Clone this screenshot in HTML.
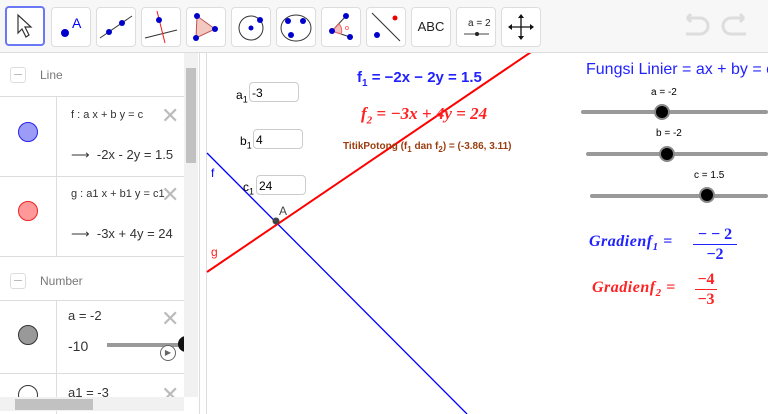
<!DOCTYPE html><html><head><style>
body{margin:0;width:768px;height:414px;overflow:hidden;background:#fff;font-family:"Liberation Sans",sans-serif;position:relative}
.a{position:absolute}
.tb{left:0;top:0;width:768px;height:52px;background:#f7f7f7;border-bottom:1px solid #ddd}
.btn{position:absolute;top:7px;width:38px;height:38px;background:#fff;border:1px solid #ddd;border-radius:4px}
.sel{border:2px solid #6b78f5;width:36px;height:36px}
.hl{height:1px;background:#ddd;left:0;width:184px}
.vl{width:1px;background:#ddd}
.t{font-size:12px;color:#333;white-space:nowrap}
.x{font-size:22px;color:#bbb;font-weight:100}
.inp{border:1px solid #ccc;border-radius:4px;height:20px;background:#fff;font-size:12px;line-height:20px;padding-left:2px;box-sizing:border-box}
</style></head><body>
<div class="a tb"></div>
<div class="btn sel" style="left:5px;top:6px"><svg width="36" height="36"><path d="M11 7 L11 25 L15 21 L19 29 L22 27 L18 19 L24 19 Z" fill="#fff" stroke="#333" stroke-width="1.2"/></svg></div>
<div class="btn" style="left:51px"><svg width="38" height="38"><circle cx="13" cy="25" r="4" fill="#00c"/><text x="20" y="20" font-size="14" fill="#00f" font-family="Liberation Sans">A</text></svg></div>
<div class="btn" style="left:96px"><svg width="38" height="38"><line x1="3" y1="30" x2="35" y2="8" stroke="#333"/><circle cx="12" cy="24" r="3" fill="#00c"/><circle cx="25" cy="15" r="3" fill="#00c"/></svg></div>
<div class="btn" style="left:141px"><svg width="38" height="38"><line x1="3" y1="30" x2="35" y2="22" stroke="#333"/><line x1="15" y1="3" x2="23" y2="35" stroke="#e22"/><circle cx="17" cy="12" r="3" fill="#00c"/></svg></div>
<div class="btn" style="left:186px"><svg width="38" height="38"><polygon points="10,8 28,21 9,30" fill="#f3c8c0" stroke="#b55"/><circle cx="10" cy="8" r="3" fill="#00c"/><circle cx="28" cy="21" r="3" fill="#00c"/><circle cx="9" cy="30" r="3" fill="#00c"/></svg></div>
<div class="btn" style="left:231px"><svg width="38" height="38"><circle cx="19" cy="20" r="12" fill="none" stroke="#333"/><circle cx="19" cy="20" r="2.5" fill="#00c"/><circle cx="28" cy="12" r="3" fill="#00c"/></svg></div>
<div class="btn" style="left:276px"><svg width="38" height="38"><ellipse cx="19" cy="20" rx="15" ry="13" fill="none" stroke="#333"/><circle cx="11" cy="13" r="3" fill="#00c"/><circle cx="26" cy="13" r="3" fill="#00c"/><circle cx="14" cy="27" r="3" fill="#00c"/></svg></div>
<div class="btn" style="left:321px"><svg width="38" height="38"><path d="M10 23 L24 8 M10 23 L28 29" stroke="#333"/><path d="M10 23 L17 16 A9 9 0 0 1 19 26 Z" fill="#f3c0c0" stroke="#e66"/><circle cx="10" cy="23" r="3" fill="#00c"/><circle cx="24" cy="8" r="3" fill="#00c"/><circle cx="28" cy="29" r="3" fill="#00c"/><text x="23" y="22" font-size="7" fill="#e22">o</text></svg></div>
<div class="btn" style="left:366px"><svg width="38" height="38"><line x1="5" y1="5" x2="33" y2="33" stroke="#333"/><circle cx="28" cy="10" r="2.5" fill="#e00"/><circle cx="10" cy="27" r="3" fill="#00c"/></svg></div>
<div class="btn" style="left:411px;font-size:13px;text-align:center;line-height:38px;color:#222">ABC</div>
<div class="btn" style="left:456px"><svg width="38" height="38"><text x="11" y="18" font-size="10" fill="#222" font-family="Liberation Sans">a = 2</text><line x1="7" y1="26" x2="32" y2="26" stroke="#444"/><circle cx="20" cy="26" r="2" fill="#222"/></svg></div>
<div class="btn" style="left:501px"><svg width="38" height="38"><path d="M19 8 V30 M8 19 H30" stroke="#111" stroke-width="1.3"/><path d="M19 6 L16 10 H22Z M19 32 L16 28 H22Z M6 19 L10 16 V22Z M32 19 L28 16 V22Z" fill="#111"/></svg></div>
<svg class="a" style="left:680px;top:10px" width="80" height="30"><path d="M7 8 H20 A8 8 0 0 1 20 24 H6 M7 8 L11 4 M7 8 L11 12" fill="none" stroke="#ddd" stroke-width="3"/><path d="M64 8 H51 A8 8 0 0 0 51 24 H66 M64 8 L60 4 M64 8 L60 12" fill="none" stroke="#ddd" stroke-width="3"/></svg>

<div class="a" style="left:0;top:53px;width:184px;height:361px;overflow:hidden">
<div class="a" style="left:10px;top:14px;width:14px;height:14px;border:1px solid #ddd;border-radius:3px"><div style="margin:6px 3px;height:1px;background:#bbb"></div></div>
<div class="a t" style="left:40px;top:15px;color:#777">Line</div>
<div class="a hl" style="top:43px"></div>
<div class="a vl" style="left:56px;top:43px;height:160px"></div>
<div class="a" style="left:18px;top:69px;width:18px;height:18px;border-radius:50%;background:#9c9cf6;border:1px solid #22e"></div>
<div class="a t" style="left:71px;top:56px;font-size:11px">f : a x + b y = c</div>
<div class="a x" style="left:161px;top:50px">✕</div>
<div class="a t" style="left:71px;top:94px;font-size:13px">⟶&nbsp; -2x - 2y = 1.5</div>
<div class="a hl" style="top:123px"></div>
<div class="a" style="left:18px;top:148px;width:18px;height:18px;border-radius:50%;background:#f99;border:1px solid #e22"></div>
<div class="a t" style="left:71px;top:135px;font-size:11px">g : a1 x + b1 y = c1</div>
<div class="a x" style="left:161px;top:129px">✕</div>
<div class="a t" style="left:71px;top:173px;font-size:13px">⟶&nbsp; -3x + 4y = 24</div>
<div class="a hl" style="top:203px"></div>
<div class="a" style="left:10px;top:220px;width:14px;height:14px;border:1px solid #ddd;border-radius:3px"><div style="margin:6px 3px;height:1px;background:#bbb"></div></div>
<div class="a t" style="left:40px;top:221px;color:#777">Number</div>
<div class="a hl" style="top:247px"></div>
<div class="a vl" style="left:56px;top:247px;height:120px"></div>
<div class="a" style="left:18px;top:272px;width:18px;height:18px;border-radius:50%;background:#999;border:1px solid #333"></div>
<div class="a t" style="left:68px;top:255px;font-size:13px">a = -2</div>
<div class="a x" style="left:161px;top:253px">✕</div>
<div class="a t" style="left:68px;top:285px;font-size:14px">-10</div>
<div class="a" style="left:107px;top:290px;width:80px;height:4px;background:#999"></div>
<div class="a" style="left:160px;top:292px;width:14px;height:14px;border-radius:50%;border:1.5px solid #666;background:#fff;font-size:8px;text-align:center;line-height:14px;color:#666">▶</div>
<div class="a" style="left:178px;top:283px;width:16px;height:16px;border-radius:50%;background:#111"></div>
<div class="a hl" style="top:320px"></div>
<div class="a" style="left:18px;top:332px;width:18px;height:18px;border-radius:50%;border:1px solid #333"></div>
<div class="a t" style="left:68px;top:332px;font-size:13px">a1 = -3</div>
<div class="a x" style="left:161px;top:329px">✕</div>
</div>
<div class="a" style="left:184px;top:53px;width:14px;height:344px;background:#f1f1f1"></div>
<div class="a" style="left:186px;top:68px;width:10px;height:95px;background:#c1c1c1"></div>
<div class="a" style="left:0;top:397px;width:184px;height:14px;background:#f1f1f1"></div>
<div class="a" style="left:15px;top:399px;width:78px;height:11px;background:#c1c1c1"></div>
<div class="a" style="left:199px;top:53px;width:1px;height:361px;background:#ddd"></div>
<div class="a" style="left:206px;top:53px;width:1px;height:361px;background:#ddd"></div>

<svg class="a" style="left:0;top:53px" width="768" height="361">
<line x1="207" y1="100" x2="467" y2="361" stroke="#00f" stroke-width="1.3"/>
<line x1="207" y1="219" x2="537" y2="-5" stroke="#f00" stroke-width="2"/>
<circle cx="276" cy="168" r="3.5" fill="#444"/>
</svg>
<div class="a" style="left:211px;top:166px;font-size:12px;color:#00f">f</div>
<div class="a" style="left:211px;top:245px;font-size:12px;color:#f22">g</div>
<div class="a" style="left:279px;top:204px;font-size:12px;color:#444">A</div>
<div class="a" style="left:236px;top:88px;font-size:12px">a<sub style="font-size:9px">1</sub></div>
<div class="a inp" style="left:249px;top:82px;width:50px">-3</div>
<div class="a" style="left:240px;top:134px;font-size:12px">b<sub style="font-size:9px">1</sub></div>
<div class="a inp" style="left:253px;top:129px;width:50px">4</div>
<div class="a" style="left:243px;top:180px;font-size:12px">c<sub style="font-size:9px">1</sub></div>
<div class="a inp" style="left:256px;top:175px;width:50px">24</div>
<div class="a" style="left:357px;top:69px;font-size:15px;font-weight:bold;color:#22f;white-space:nowrap">f<sub style="font-size:10px">1</sub> = −2x − 2y = 1.5</div>
<div class="a" style="left:361px;top:104px;font-size:17px;font-weight:bold;font-style:italic;color:#f22;font-family:'Liberation Serif',serif;white-space:nowrap">f<sub style="font-size:11px">2</sub> = −3x + 4y = 24</div>
<div class="a" style="left:343px;top:141px;font-size:10px;font-weight:bold;color:#9a3e10;white-space:nowrap">TitikPotong (f<sub style="font-size:8px">1</sub> dan f<sub style="font-size:8px">2</sub>) = (-3.86, 3.11)</div>
<div class="a" style="left:586px;top:61px;font-size:16px;color:#22f;white-space:nowrap">Fungsi Linier = ax + by = c</div>
<div class="a" style="left:651px;top:87px;font-size:10px">a = -2</div>
<div class="a" style="left:581px;top:110px;width:187px;height:4px;background:#999;border-radius:2px"></div>
<div class="a" style="left:654px;top:104px;width:12px;height:12px;border-radius:50%;background:#000;border:2px solid #888"></div>
<div class="a" style="left:656px;top:128px;font-size:10px">b = -2</div>
<div class="a" style="left:586px;top:152px;width:182px;height:4px;background:#999;border-radius:2px"></div>
<div class="a" style="left:659px;top:146px;width:12px;height:12px;border-radius:50%;background:#000;border:2px solid #888"></div>
<div class="a" style="left:694px;top:170px;font-size:10px">c = 1.5</div>
<div class="a" style="left:590px;top:194px;width:178px;height:4px;background:#999;border-radius:2px"></div>
<div class="a" style="left:699px;top:187px;width:12px;height:12px;border-radius:50%;background:#000;border:2px solid #888"></div>
<div class="a" style="left:589px;top:233px;font-size:16px;font-weight:bold;font-style:italic;color:#22f;font-family:'Liberation Serif',serif;white-space:nowrap;letter-spacing:0.5px">Gradienf<sub style="font-size:11px">1</sub> =</div>
<div class="a" style="left:693px;top:225px;width:44px;text-align:center;font-size:16px;font-weight:bold;color:#22f;font-family:'Liberation Serif',serif;line-height:19px"><div style="border-bottom:1px solid #22f">− − 2</div><div>−2</div></div>
<div class="a" style="left:592px;top:279px;font-size:16px;font-weight:bold;font-style:italic;color:#f22;font-family:'Liberation Serif',serif;white-space:nowrap;letter-spacing:0.5px">Gradienf<sub style="font-size:11px">2</sub> =</div>
<div class="a" style="left:695px;top:270px;width:22px;text-align:center;font-size:16px;font-weight:bold;color:#f22;font-family:'Liberation Serif',serif;line-height:19px"><div style="border-bottom:1px solid #f22">−4</div><div>−3</div></div>
</body></html>
